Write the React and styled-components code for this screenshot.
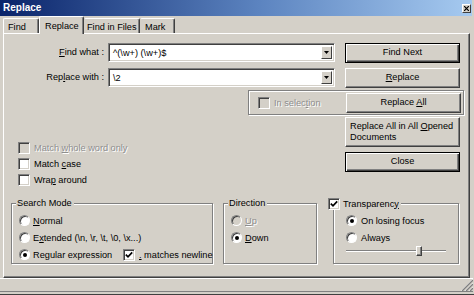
import React from 'react';
import styled, { createGlobalStyle, css } from 'styled-components';

// classic window colours
const face = '#d4d0c8';
const shadow = '#808080';
const dark = '#404040';

const GlobalStyle = createGlobalStyle`
  html, body { margin: 0; padding: 0; background: ${face}; }
  body {
    font-family: 'Liberation Sans', Arial, sans-serif;
    font-size: 9.2px;
    color: #000;
  }
  * { box-sizing: border-box; }
`;

const Window = styled.div`
  width: 474px;
  height: 295px;
  display: flex;
  flex-direction: column;
  background: ${face};
  border-bottom: 1px solid ${dark};
  overflow: hidden;
`;

const TitleBar = styled.div`
  flex: none;
  height: 16px;
  margin-right: 2px;
  padding: 0 1px 0 3px;
  display: flex;
  align-items: center;
  justify-content: space-between;
  background: linear-gradient(to right, #0a246a 0%, #5c84c0 55%, #a6caf0 100%);
`;

const TitleText = styled.span`
  color: #fff;
  font-weight: bold;
  font-size: 10px;
  line-height: 16px;
`;

const CloseBox = styled.span`
  width: 9px;
  height: 9px;
  display: flex;
  align-items: center;
  justify-content: center;
  background: ${face};
  border: 1px solid;
  border-color: #fff ${dark} ${dark} #fff;
`;

const TabStrip = styled.div`
  flex: none;
  height: 17px;
  padding-left: 3px;
  display: flex;
  align-items: flex-end;
`;

const Tab = styled.div`
  width: ${p => p.$w}px;
  height: ${p => (p.$active ? 18 : 15)}px;
  margin-bottom: ${p => (p.$active ? -1 : 0)}px;
  position: relative;
  z-index: ${p => (p.$active ? 2 : 0)};
  padding: ${p => (p.$active ? 0 : 1)}px 0 0 ${p => p.$pl}px;
  display: flex;
  align-items: center;
  background: ${face};
  border-top: 1px solid #fff;
  border-left: 1px solid ${p => (p.$first || p.$active ? '#fff' : face)};
  border-right: 1px solid ${dark};
  box-shadow: inset -1px 0 0 ${shadow};
  border-radius: 2px 2px 0 0;
  white-space: nowrap;
  overflow: hidden;
`;

const Panel = styled.div`
  flex: none;
  position: relative;
  z-index: 1;
  margin-left: 3px;
  width: 467px;
  height: 245px;
  display: flex;
  flex-direction: column;
  border-top: 1px solid #fff;
  border-left: 1px solid #fff;
  border-right: 1px solid ${dark};
  border-bottom: 1px solid ${dark};
  box-shadow: inset -1px -1px 0 ${shadow};
`;

const FieldRow = styled.div`
  display: flex;
  align-items: flex-start;
  margin-top: ${p => p.$mt}px;
`;

const FieldLabel = styled.label`
  width: 100px;
  line-height: 19px;
  text-align: right;
  white-space: nowrap;
`;

const Combo = styled.div`
  width: 227px;
  height: 19px;
  margin-left: 4px;
  padding: 2px 2px 2px 4px;
  display: flex;
  align-items: center;
  background: #fff;
  border: 1px solid;
  border-color: ${shadow} #fff #fff ${shadow};
  box-shadow: inset 1px 1px 0 ${dark}, inset -1px -1px 0 ${face};
`;

const ComboText = styled.span`
  flex: 1;
  white-space: nowrap;
`;

const DropButton = styled.span`
  width: 11px;
  height: 13px;
  display: flex;
  align-items: center;
  justify-content: center;
  background: ${face};
  border: 1px solid;
  border-color: #fff ${dark} ${dark} #fff;
`;

const Button = styled.button`
  width: 115px;
  height: ${p => p.$h || 20}px;
  margin: 0;
  margin-left: ${p => (p.$push ? 'auto' : `${p.$ml || 0}px`)};
  padding: 0 ${p => (p.$left ? 4 : 2)}px;
  display: flex;
  align-items: center;
  justify-content: ${p => (p.$left ? 'flex-start' : 'center')};
  text-align: left;
  font: inherit;
  line-height: 11.5px;
  color: #000;
  background: ${face};
  border: 1px solid;
  border-color: #fff ${dark} ${dark} #fff;
  box-shadow: inset -1px -1px 0 ${shadow};
  cursor: default;
  ${p =>
    p.$default &&
    css`
      border: 1px solid #000;
      box-shadow: inset 1px 1px 0 #fff, inset -1px -1px 0 ${dark}, inset -2px -2px 0 ${shadow};
    `}
`;

const SelectionGroup = styled.div`
  width: 216px;
  height: 25px;
  margin: 2px 0 0 244px;
  padding: 0 2px 0 9px;
  display: flex;
  align-items: center;
  border: 1px solid ${shadow};
  box-shadow: inset 1px 1px 0 #fff, 1px 1px 0 #fff;
`;

const LowerRow = styled.div`
  display: flex;
  margin-top: 2px;
`;

const Checks = styled.div`
  width: 341px;
  padding: 23px 0 0 14px;
  display: flex;
  flex-direction: column;
`;

const ButtonColumn = styled.div`
  width: 115px;
  display: flex;
  flex-direction: column;
  gap: 5px;
`;

const OptionRow = styled.div`
  height: ${p => p.$h || 17}px;
  display: flex;
  align-items: center;
  white-space: nowrap;
`;

const OptionItem = styled.span`
  display: flex;
  align-items: center;
  width: ${p => (p.$w ? `${p.$w}px` : 'auto')};
  flex: none;
`;

const Label = styled.span`
  margin-left: ${p => p.$ml ?? 3}px;
  color: ${p => (p.$disabled ? '#8e8e8e' : '#000')};
  text-shadow: ${p => (p.$disabled ? '1px 1px 0 #fff' : 'none')};
  white-space: nowrap;
`;

const CheckBox = styled.span`
  width: 12px;
  height: 12px;
  flex: none;
  display: inline-flex;
  align-items: center;
  justify-content: center;
  background: ${p => (p.$disabled ? face : '#fff')};
  border: 1px solid;
  border-color: ${shadow} #fff #fff ${shadow};
  box-shadow: inset 1px 1px 0 ${dark}, inset -1px -1px 0 ${face};
`;

const Radio = styled.span`
  width: 11px;
  height: 11px;
  flex: none;
  position: relative;
  border-radius: 50%;
  background: ${p => (p.$disabled ? face : '#fff')};
  border: 1px solid;
  border-color: ${shadow} #fff #fff ${shadow};
  box-shadow: inset 1px 1px 0 ${dark};
  ${p =>
    p.$checked &&
    css`
      &::after {
        content: '';
        position: absolute;
        left: 2.5px;
        top: 2.5px;
        width: 4px;
        height: 4px;
        border-radius: 50%;
        background: #000;
      }
    `}
`;

const GroupRow = styled.div`
  display: flex;
  align-items: flex-start;
  margin: 15px 0 0 7px;
`;

const Group = styled.div`
  position: relative;
  width: ${p => p.$w}px;
  height: 61px;
  margin-left: ${p => p.$ml || 0}px;
  padding: 8px 0 0 ${p => p.$pl}px;
  border: 1px solid ${shadow};
  box-shadow: inset 1px 1px 0 #fff, 1px 1px 0 #fff;
`;

const GroupTitle = styled.div`
  position: absolute;
  top: -6px;
  left: ${p => p.$left}px;
  padding: 0 2px 0 1px;
  display: flex;
  align-items: center;
  line-height: 11px;
  background: ${face};
  white-space: nowrap;
`;

const Slider = styled.div`
  position: relative;
  width: 100px;
  height: 10px;
  &::before {
    content: '';
    position: absolute;
    left: 0;
    right: 0;
    top: 4px;
    border-top: 1px solid ${shadow};
    border-bottom: 1px solid #fff;
  }
`;

const Thumb = styled.span`
  position: absolute;
  top: 0;
  left: ${p => p.$pos}px;
  width: 6px;
  height: 10px;
  background: ${face};
  border: 1px solid;
  border-color: #fff ${dark} ${dark} #fff;
  box-shadow: inset -1px -1px 0 ${shadow};
`;

const StatusBar = styled.div`
  flex: none;
  height: 14px;
  margin-right: 1px;
  display: flex;
  justify-content: flex-end;
  align-items: flex-end;
  border-top: 1px solid #fff;
  border-bottom: 1px solid ${shadow};
`;

const Check = () => (
  <svg width="8" height="8" viewBox="0 0 8 8">
    <path d="M0.8 3.6 L3 5.8 L7.2 1.4" fill="none" stroke="#000" strokeWidth="1.7" />
  </svg>
);

const Arrow = () => (
  <svg width="5" height="3" viewBox="0 0 5 3">
    <path d="M0 0 H5 L2.5 3 Z" fill="#000" />
  </svg>
);

const Grip = () => (
  <svg width="12" height="12" viewBox="0 0 12 12">
    {[0, 4, 8].map(o => (
      <g key={o}>
        <line x1={12} y1={o} x2={o} y2={12} stroke="#fff" strokeWidth="1" />
        <line x1={12} y1={o + 1} x2={o + 1} y2={12} stroke={shadow} strokeWidth="1.4" />
      </g>
    ))}
  </svg>
);

const CheckOption = ({ checked, disabled, children }) => (
  <OptionRow $h={16}>
    <CheckBox $disabled={disabled}>{checked && <Check />}</CheckBox>
    <Label $ml={4} $disabled={disabled}>{children}</Label>
  </OptionRow>
);

const tabs = [
  { name: 'Find', w: 36, pl: 4 },
  { name: 'Replace', w: 45, pl: 5, active: true },
  { name: 'Find in Files', w: 56, pl: 2 },
  { name: 'Mark', w: 35, pl: 4 },
];

const transparency = 74;

export default function App() {
  return (
    <>
      <GlobalStyle />
      <Window>
        <TitleBar>
          <TitleText>Replace</TitleText>
          <CloseBox>
            <svg width="5" height="5" viewBox="0 0 5 5">
              <path d="M0 0 L5 5 M5 0 L0 5" stroke="#000" strokeWidth="1.2" />
            </svg>
          </CloseBox>
        </TitleBar>

        <TabStrip>
          {tabs.map((t, i) => (
            <Tab key={t.name} $w={t.w} $pl={t.pl} $active={t.active} $first={i === 0}>
              {t.name}
            </Tab>
          ))}
        </TabStrip>

        <Panel>
          <FieldRow $mt={9}>
            <FieldLabel>
              <u>F</u>ind what :
            </FieldLabel>
            <Combo>
              <ComboText>{'^(\\w+) (\\w+)$'}</ComboText>
              <DropButton>
                <Arrow />
              </DropButton>
            </Combo>
            <Button $default $ml={10}>Find Next</Button>
          </FieldRow>

          <FieldRow $mt={5}>
            <FieldLabel>
              Rep<u>l</u>ace with :
            </FieldLabel>
            <Combo>
              <ComboText>{'\\2'}</ComboText>
              <DropButton>
                <Arrow />
              </DropButton>
            </Combo>
            <Button $ml={10}>
              <span>
                <u>R</u>eplace
              </span>
            </Button>
          </FieldRow>

          <SelectionGroup>
            <CheckBox $disabled />
            <Label $ml={4} $disabled>
              In selec<u>t</u>ion
            </Label>
            <Button $push>
              <span>
                Replace <u>A</u>ll
              </span>
            </Button>
          </SelectionGroup>

          <LowerRow>
            <Checks>
              <CheckOption disabled>
                Match <u>w</u>hole word only
              </CheckOption>
              <CheckOption>
                Match <u>c</u>ase
              </CheckOption>
              <CheckOption>
                Wra<u>p</u> around
              </CheckOption>
            </Checks>
            <ButtonColumn>
              <Button $h={30} $left>
                <span>
                  Replace All in All <u>O</u>pened
                  <br />
                  Documents
                </span>
              </Button>
              <Button $default>Close</Button>
            </ButtonColumn>
          </LowerRow>

          <GroupRow>
            <Group $w={202} $pl={7}>
              <GroupTitle $left={4}>Search Mode</GroupTitle>
              <OptionRow>
                <Radio />
                <Label>
                  <u>N</u>ormal
                </Label>
              </OptionRow>
              <OptionRow>
                <Radio />
                <Label>
                  E<u>x</u>tended {'(\\n, \\r, \\t, \\0, \\x...)'}
                </Label>
              </OptionRow>
              <OptionRow>
                <OptionItem $w={104}>
                  <Radio $checked />
                  <Label>
                    Re<u>g</u>ular expression
                  </Label>
                </OptionItem>
                <CheckBox>
                  <Check />
                </CheckBox>
                <Label $ml={4}>
                  <u>.</u> matches newline
                </Label>
              </OptionRow>
            </Group>

            <Group $w={94} $ml={10} $pl={7}>
              <GroupTitle $left={4}>Direction</GroupTitle>
              <OptionRow>
                <Radio $disabled />
                <Label $disabled>
                  <u>U</u>p
                </Label>
              </OptionRow>
              <OptionRow>
                <Radio $checked />
                <Label>
                  <u>D</u>own
                </Label>
              </OptionRow>
            </Group>

            <Group $w={126} $ml={16} $pl={12}>
              <GroupTitle $left={-7}>
                <CheckBox>
                  <Check />
                </CheckBox>
                <Label $ml={3}>
                  Transparenc<u>y</u>
                </Label>
              </GroupTitle>
              <OptionRow>
                <Radio $checked />
                <Label $ml={4}>On losing focus</Label>
              </OptionRow>
              <OptionRow>
                <Radio />
                <Label $ml={4}>Always</Label>
              </OptionRow>
              <Slider>
                <Thumb $pos={Math.round((transparency / 100) * 94)} />
              </Slider>
            </Group>
          </GroupRow>
        </Panel>

        <StatusBar>
          <Grip />
        </StatusBar>
      </Window>
    </>
  );
}
